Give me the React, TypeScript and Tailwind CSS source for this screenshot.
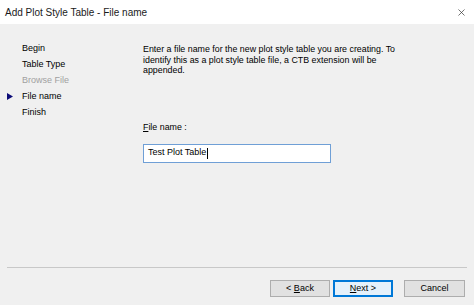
import { X } from 'lucide-react';

const steps = [
  { label: 'Begin' },
  { label: 'Table Type' },
  { label: 'Browse File', disabled: true },
  { label: 'File name', active: true },
  { label: 'Finish' },
];

export default function App() {
  return (
    <div className="flex h-[305px] w-[474px] flex-col overflow-hidden bg-[#f0f0f0] font-['Liberation_Sans',Arial,sans-serif] text-black">
      {/* title bar */}
      <div className="flex h-[24px] shrink-0 items-center justify-between bg-white pl-[5px] pr-[7px]">
        <span className="text-[10px] text-[#1a1a1a]">Add Plot Style Table - File name</span>
        <X className="h-[11px] w-[11px] text-[#333]" strokeWidth={1.5} />
      </div>

      {/* body */}
      <div className="flex h-[243px] shrink-0">
        <div className="w-[143px] shrink-0 pt-[16px]">
          {steps.map((s) => (
            <div key={s.label} className="flex h-[16.2px] items-center text-[9px] leading-none">
              <span className="flex w-[22px] justify-end pr-[9px]">
                {s.active && (
                  <svg width="6" height="7" viewBox="0 0 6 7">
                    <path d="M0 0 L6 3.5 L0 7 Z" fill="#0c0c78" />
                  </svg>
                )}
              </span>
              <span className={s.disabled ? 'text-[#a0a0a0]' : 'text-black'}>{s.label}</span>
            </div>
          ))}
        </div>

        <div className="flex flex-1 flex-col pt-[20px]">
          <p className="w-[258px] text-[8.85px] leading-[10.6px]">
            Enter a file name for the new plot style table you are creating. To identify this as a plot style table file, a CTB extension will be appended.
          </p>
          <div className="mt-[47px] text-[8.85px] leading-none">
            <span className="underline">F</span>ile name :
          </div>
          <div className="mt-[12px] flex h-[19px] w-[188px] items-center border border-[#6f9fd6] bg-white px-[4px] text-[9px]">
            Test Plot Table
            <span className="ml-px inline-block h-[11px] w-px bg-black" />
          </div>
        </div>
      </div>

      {/* separator */}
      <div className="ml-[7px] mr-[7px] h-px shrink-0 bg-[#c8c8c8]" />

      {/* buttons */}
      <div className="flex justify-end pr-[9px] pt-[12px] text-[9px]">
        <button className="h-[17px] w-[60px] border border-[#adadad] bg-[#e1e1e1]">
          &lt; <span className="underline">B</span>ack
        </button>
        <button className="ml-[3px] h-[17px] w-[60px] border-2 border-[#0078d7] bg-[#e5f1fb]">
          <span className="underline">N</span>ext &gt;
        </button>
        <button className="ml-[11px] h-[17px] w-[61px] border border-[#adadad] bg-[#e1e1e1]">
          Cancel
        </button>
      </div>
    </div>
  );
}
